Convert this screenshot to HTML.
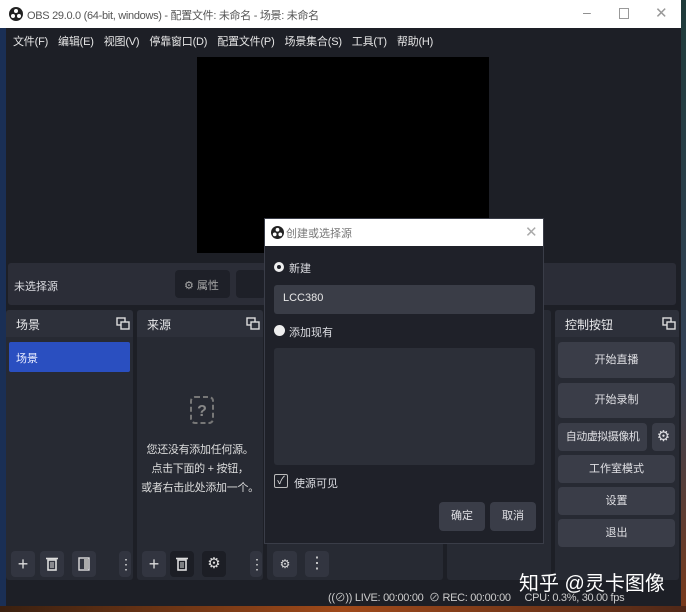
<!DOCTYPE html>
<html><head><meta charset="utf-8"><style>
*{margin:0;padding:0;box-sizing:border-box}
body{width:686px;height:612px;overflow:hidden;background:#2a3140;font-family:"Liberation Sans","Noto Sans CJK SC",sans-serif;font-size:12px;color:#dcdde2;position:relative;white-space:nowrap}
.a{position:absolute}
.win{left:0;top:0;width:681px;height:607px;background:#1d1f26}
.title{left:0;top:0;width:681px;height:28px;background:#fff;color:#555;font-size:11px}
.menu span{margin-right:10px}
.panel{background:#272a33;border-radius:3px}
.hdr{background:#2d303a;height:27px;border-radius:3px 3px 0 0;font-size:12px;padding:6px 10px;color:#e8e8ea}
.btn{background:#3a3d48;border-radius:4px;color:#e0e0e4;text-align:center;font-size:11px}
.ib{background:#323540;border-radius:4px;width:24px;height:26px;color:#ddd;text-align:center;line-height:26px;font-size:18px}
.ib svg{position:absolute;left:5px;top:5px}
</style></head><body>
<div class="a win"></div>
<div class="a" style="left:0;top:0;width:6px;height:607px;background:#1a2f55"></div>
<div class="a" style="left:681px;top:0;width:5px;height:612px;background:linear-gradient(#1f3b3a,#334156 60%,#7a3a1a)"></div>
<div class="a" style="left:0;top:606px;width:686px;height:6px;background:linear-gradient(90deg,#3a2010,#a04a1a,#502818)"></div>
<div class="a title">
 <svg class="a" style="left:9px;top:7px" width="14" height="14" viewBox="0 0 14 14"><circle cx="7" cy="7" r="7" fill="#222"/><circle cx="7" cy="4" r="2" fill="#fff"/><circle cx="4" cy="9" r="2" fill="#fff"/><circle cx="10" cy="9" r="2" fill="#fff"/></svg>
 <div class="a" style="left:27px;top:7px;letter-spacing:-0.3px">OBS 29.0.0 (64-bit, windows) - 配置文件: 未命名 - 场景: 未命名</div>
 <div class="a" style="left:583px;top:4px;color:#888;font-size:14px">–</div>
 <div class="a" style="left:619px;top:8px;width:10px;height:11px;border:1px solid #999"></div>
 <div class="a" style="left:655px;top:4px;color:#999;font-size:15px">✕</div>
</div>
<div class="a menu" style="left:13px;top:33px;font-size:11px;color:#e6e6e6;letter-spacing:-0.2px"><span>文件(F)</span><span>编辑(E)</span><span>视图(V)</span><span>停靠窗口(D)</span><span>配置文件(P)</span><span>场景集合(S)</span><span>工具(T)</span><span>帮助(H)</span></div>
<div class="a" style="left:197px;top:57px;width:292px;height:196px;background:#000"></div>
<div class="a" style="left:8px;top:263px;width:668px;height:42px;background:#2b2d37;border-radius:3px"></div>
<div class="a" style="left:14px;top:278px;font-size:11px">未选择源</div>
<div class="a" style="left:175px;top:270px;width:55px;height:28px;border-radius:4px;background:#1e2028;padding:7px 9px;color:#aaa;font-size:11px">⚙ 属性</div>
<div class="a" style="left:236px;top:270px;width:30px;height:28px;border-radius:4px;background:#1e2028"></div>

<div class="a panel" style="left:6px;top:310px;width:127px;height:270px"><div class="hdr">场景</div></div>
<div class="a" style="left:9px;top:342px;width:121px;height:30px;background:#2a4fc0;border-radius:2px;padding:8px 7px;color:#e8ecff;font-size:11px">场景</div>
<div class="a panel" style="left:137px;top:310px;width:126px;height:270px"><div class="hdr">来源</div></div>
<div class="a panel" style="left:267px;top:310px;width:176px;height:270px"></div>
<div class="a panel" style="left:447px;top:310px;width:104px;height:270px"></div>
<div class="a panel" style="left:555px;top:310px;width:124px;height:270px"><div class="hdr">控制按钮</div></div>
<svg class="a" style="left:116px;top:317px" width="14" height="14"><rect x="1" y="1" width="8" height="7" fill="none" stroke="#ddd" stroke-width="1.4"/><rect x="5" y="5" width="8" height="7" fill="#2d303a" stroke="#ddd" stroke-width="1.4"/></svg>
<svg class="a" style="left:246px;top:317px" width="14" height="14"><rect x="1" y="1" width="8" height="7" fill="none" stroke="#ddd" stroke-width="1.4"/><rect x="5" y="5" width="8" height="7" fill="#2d303a" stroke="#ddd" stroke-width="1.4"/></svg>
<svg class="a" style="left:662px;top:317px" width="14" height="14"><rect x="1" y="1" width="8" height="7" fill="none" stroke="#ddd" stroke-width="1.4"/><rect x="5" y="5" width="8" height="7" fill="#2d303a" stroke="#ddd" stroke-width="1.4"/></svg>
<svg class="a" style="left:190px;top:396px" width="24" height="28"><rect x="1" y="1" width="22" height="26" rx="4" fill="none" stroke="#777" stroke-width="2" stroke-dasharray="5 3"/><text x="12" y="20" text-anchor="middle" fill="#888" font-size="16" font-family="Liberation Sans" font-weight="bold">?</text></svg>
<div class="a" style="left:137px;top:441px;width:126px;text-align:center;line-height:19px;font-size:11px;color:#ddd;letter-spacing:-0.3px">您还没有添加任何源。<br>点击下面的 + 按钮，<br>或者右击此处添加一个。</div>

<div class="a btn" style="left:558px;top:342px;width:117px;height:36px;line-height:36px">开始直播</div>
<div class="a btn" style="left:558px;top:383px;width:117px;height:35px;line-height:35px">开始录制</div>
<div class="a btn" style="left:558px;top:423px;width:89px;height:28px;line-height:28px;font-size:11px;letter-spacing:-0.5px">自动虚拟摄像机</div>
<div class="a btn" style="left:652px;top:423px;width:23px;height:28px;line-height:28px;font-size:15px">⚙</div>
<div class="a btn" style="left:558px;top:455px;width:117px;height:28px;line-height:28px">工作室模式</div>
<div class="a btn" style="left:558px;top:487px;width:117px;height:28px;line-height:28px">设置</div>
<div class="a btn" style="left:558px;top:519px;width:117px;height:28px;line-height:28px">退出</div>

<div class="a ib" style="left:11px;top:551px">+</div>
<div class="a ib" style="left:40px;top:551px"><svg width="14" height="16"><rect x="3" y="4" width="8" height="10" fill="none" stroke="#ddd" stroke-width="1.6"/><line x1="1" y1="2.5" x2="13" y2="2.5" stroke="#ddd" stroke-width="1.6"/><line x1="6" y1="6" x2="6" y2="12" stroke="#ddd"/><line x1="8" y1="6" x2="8" y2="12" stroke="#ddd"/></svg></div>
<div class="a ib" style="left:72px;top:551px"><svg width="14" height="16"><rect x="2" y="2" width="10" height="12" fill="none" stroke="#ddd" stroke-width="1.4"/><rect x="7" y="3" width="4" height="10" fill="#aaa"/></svg></div>
<div class="a ib" style="left:119px;top:551px;width:12px;font-size:14px">⋮</div>
<div class="a ib" style="left:142px;top:551px">+</div>
<div class="a ib" style="left:170px;top:551px;background:#1c1e25"><svg width="14" height="16"><rect x="3" y="4" width="8" height="10" fill="none" stroke="#ddd" stroke-width="1.6"/><line x1="1" y1="2.5" x2="13" y2="2.5" stroke="#ddd" stroke-width="1.6"/><line x1="6" y1="6" x2="6" y2="12" stroke="#ddd"/><line x1="8" y1="6" x2="8" y2="12" stroke="#ddd"/></svg></div>
<div class="a ib" style="left:202px;top:551px;font-size:15px;background:#1c1e25">⚙</div>
<div class="a ib" style="left:250px;top:551px;width:12px;font-size:14px">⋮</div>
<div class="a ib" style="left:273px;top:551px;font-size:12px">⚙</div>
<div class="a ib" style="left:305px;top:551px;font-size:16px">⋮</div>

<div class="a" style="left:328px;top:589px;font-size:11px;color:#ccc;letter-spacing:-0.3px">((⊘)) LIVE: 00:00:00 &nbsp;⊘ REC: 00:00:00 &nbsp;&nbsp;&nbsp;&nbsp;CPU: 0.3%, 30.00 fps</div>
<div class="a" style="left:519px;top:567px;font-size:20px;color:#fff">知乎 @灵卡图像</div>

<div class="a" style="left:264px;top:218px;width:280px;height:326px;background:#1f2129;border:1px solid #3a3d48">
 <div class="a" style="left:0;top:0;width:278px;height:27px;background:#fff"></div>
 <svg class="a" style="left:6px;top:7px" width="13" height="13" viewBox="0 0 14 14"><circle cx="7" cy="7" r="7" fill="#222"/><circle cx="7" cy="4" r="2" fill="#fff"/><circle cx="4" cy="9" r="2" fill="#fff"/><circle cx="10" cy="9" r="2" fill="#fff"/></svg>
 <div class="a" style="left:21px;top:6px;color:#777;font-size:11px">创建或选择源</div>
 <div class="a" style="left:260px;top:4px;color:#aaa;font-size:15px">✕</div>
 <div class="a" style="left:9px;top:43px;width:10px;height:10px;border-radius:50%;border:3px solid #eee"></div>
 <div class="a" style="left:24px;top:41px;font-size:11px">新建</div>
 <div class="a" style="left:9px;top:66px;width:261px;height:29px;background:#3a3d47;border-radius:3px;padding:7px 9px;color:#e8e8e8;font-size:11px">LCC380</div>
 <div class="a" style="left:9px;top:106px;width:11px;height:11px;border-radius:50%;background:#eee"></div>
 <div class="a" style="left:24px;top:105px;font-size:11px">添加现有</div>
 <div class="a" style="left:9px;top:129px;width:261px;height:117px;background:#2c2f38;border-radius:3px"></div>
 <div class="a" style="left:9px;top:255px;width:14px;height:14px;border:1px solid #bbb;border-radius:2px;color:#ddd;font-size:11px;line-height:12px;text-align:center">✓</div>
 <div class="a" style="left:29px;top:256px;font-size:11px">使源可见</div>
 <div class="a btn" style="left:174px;top:283px;width:46px;height:29px;line-height:29px">确定</div>
 <div class="a btn" style="left:225px;top:283px;width:46px;height:29px;line-height:29px">取消</div>
</div>
</body></html>
